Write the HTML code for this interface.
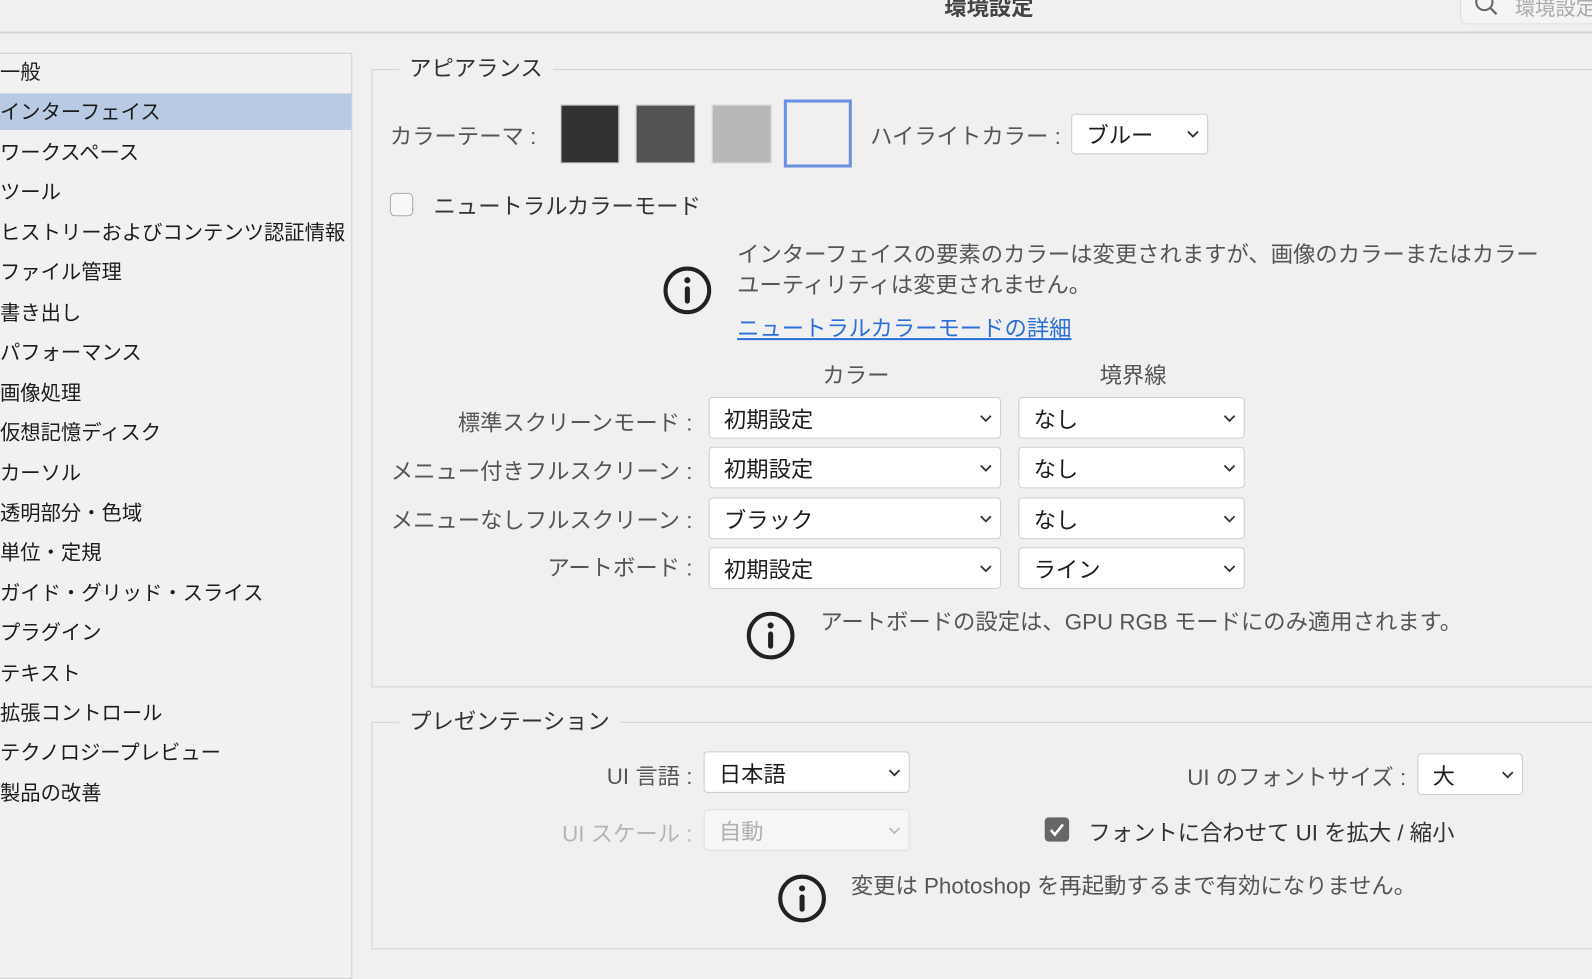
<!DOCTYPE html>
<html><head><meta charset="utf-8"><style>
body{margin:0;width:1592px;height:954px;background:#f0f0f0;overflow:hidden;position:relative;font-family:"Liberation Sans","Noto Sans CJK JP",sans-serif;color:#222}
#w{position:absolute;left:0;top:0;width:1568px;height:940px;transform:scale(1.0153);transform-origin:0 0}
.a{position:absolute;white-space:nowrap}
.sb{position:absolute;left:-2px;top:52px;width:347px;height:910px;border:1px solid #cfcfcf;background:#f1f1f1}
.it{position:absolute;left:0;font-size:20px;color:#1c1c1c;height:36px;line-height:36px;width:346px}
.lbl{font-size:22px;color:#555}
.r{text-align:right}
.sel{position:absolute;background:#fff;border:1.5px solid #cdcdcd;border-radius:4px;box-sizing:border-box;font-size:22px;color:#1e1e1e;padding-left:14px;display:flex;align-items:center}
.sel svg{position:absolute;right:8px;top:50%;margin-top:-4px}
.fs{position:absolute;border:1.5px solid #d4d4d4;border-right:none}
.leg{position:absolute;background:#f0f0f0;font-size:22px;color:#333;padding:0 10px}
.info{position:absolute}
</style></head><body><div id="w">
<div class="a" style="left:0;top:31px;width:1592px;height:2px;background:#d6d6d6"></div>
<div class="a" style="left:930px;top:-10px;font-size:22px;font-weight:bold;color:#444">環境設定</div>
<div class="a" style="left:1438px;top:-12px;width:170px;height:34px;border:1px solid #ddd;border-radius:8px;background:#f4f4f4"></div>
<svg class="a" style="left:1450px;top:-6px" width="28" height="26"><circle cx="12" cy="8" r="8" fill="none" stroke="#666" stroke-width="2"/><line x1="18" y1="14" x2="24" y2="20" stroke="#666" stroke-width="2.2"/></svg>
<div class="a" style="left:1492px;top:-8px;font-size:20px;color:#aaa">環境設定</div>

<div class="sb"></div>
<div class="a" style="left:0;top:92px;width:346px;height:36px;background:#b9cbe4"></div>
<div class="it" style="top:54px">一般</div>
<div class="it" style="top:93px">インターフェイス</div>
<div class="it" style="top:133px">ワークスペース</div>
<div class="it" style="top:172px">ツール</div>
<div class="it" style="top:212px">ヒストリーおよびコンテンツ認証情報</div>
<div class="it" style="top:251px">ファイル管理</div>
<div class="it" style="top:291px">書き出し</div>
<div class="it" style="top:330px">パフォーマンス</div>
<div class="it" style="top:370px">画像処理</div>
<div class="it" style="top:409px">仮想記憶ディスク</div>
<div class="it" style="top:449px">カーソル</div>
<div class="it" style="top:488px">透明部分・色域</div>
<div class="it" style="top:527px">単位・定規</div>
<div class="it" style="top:567px">ガイド・グリッド・スライス</div>
<div class="it" style="top:606px">プラグイン</div>
<div class="it" style="top:646px">テキスト</div>
<div class="it" style="top:685px">拡張コントロール</div>
<div class="it" style="top:724px">テクノロジープレビュー</div>
<div class="it" style="top:764px">製品の改善</div>

<div class="fs" style="left:366px;top:68px;width:1240px;height:607px"></div>
<div class="leg" style="left:393px;top:50px">アピアランス</div>
<div class="a lbl" style="left:384px;top:117px">カラーテーマ :</div>
<div class="a" style="left:552px;top:103px;width:58px;height:58px;background:#323232;border:1px solid #ddd;box-sizing:border-box"></div>
<div class="a" style="left:626px;top:103px;width:59px;height:58px;background:#535353;border:1px solid #ddd;box-sizing:border-box"></div>
<div class="a" style="left:701px;top:103px;width:59px;height:58px;background:#b8b8b8;border:1px solid #ddd;box-sizing:border-box"></div>
<div class="a" style="left:772px;top:98px;width:67px;height:67px;background:#f0f0f0;border:3px solid #6a90e0;box-sizing:border-box"></div>
<div class="a lbl" style="left:857px;top:117px">ハイライトカラー :</div>
<div class="sel" style="left:1055px;top:112px;width:135px;height:40px">ブルー<svg width="12" height="8"><path d="M1 1.5L6 6.5 11 1.5" fill="none" stroke="#333" stroke-width="1.8"/></svg></div>
<div class="a" style="left:384px;top:190px;width:23px;height:23px;border:1.5px solid #aaa;border-radius:5px;background:#f8f8f8;box-sizing:border-box"></div>
<div class="a" style="left:427px;top:186px;font-size:22px;color:#333">ニュートラルカラーモード</div>
<svg class="info" style="left:653px;top:262px" width="48" height="48"><circle cx="24" cy="24" r="21.5" fill="none" stroke="#222" stroke-width="4"/><circle cx="24" cy="14" r="3" fill="#222"/><rect x="21.5" y="20" width="5" height="17" rx="2.5" fill="#222"/></svg>
<div class="a lbl" style="left:726px;top:236px;line-height:30px">インターフェイスの要素のカラーは変更されますが、画像のカラーまたはカラー<br>ユーティリティは変更されません。</div>
<div class="a" style="left:726px;top:306px;font-size:22px;color:#2c6fd6;text-decoration:underline">ニュートラルカラーモードの詳細</div>
<div class="a lbl" style="left:810px;top:352px">カラー</div>
<div class="a lbl" style="left:1083px;top:352px">境界線</div>
<div class="a lbl r" style="right:886px;top:399px">標準スクリーンモード :</div>
<div class="a lbl r" style="right:886px;top:447px">メニュー付きフルスクリーン :</div>
<div class="a lbl r" style="right:886px;top:495px">メニューなしフルスクリーン :</div>
<div class="a lbl r" style="right:886px;top:542px">アートボード :</div>
<div class="sel" style="left:698px;top:391px;width:288px;height:41px">初期設定<svg width="12" height="8"><path d="M1 1.5L6 6.5 11 1.5" fill="none" stroke="#333" stroke-width="1.8"/></svg></div>
<div class="sel" style="left:698px;top:440px;width:288px;height:41px">初期設定<svg width="12" height="8"><path d="M1 1.5L6 6.5 11 1.5" fill="none" stroke="#333" stroke-width="1.8"/></svg></div>
<div class="sel" style="left:698px;top:490px;width:288px;height:41px">ブラック<svg width="12" height="8"><path d="M1 1.5L6 6.5 11 1.5" fill="none" stroke="#333" stroke-width="1.8"/></svg></div>
<div class="sel" style="left:698px;top:539px;width:288px;height:41px">初期設定<svg width="12" height="8"><path d="M1 1.5L6 6.5 11 1.5" fill="none" stroke="#333" stroke-width="1.8"/></svg></div>
<div class="sel" style="left:1003px;top:391px;width:223px;height:41px">なし<svg width="12" height="8"><path d="M1 1.5L6 6.5 11 1.5" fill="none" stroke="#333" stroke-width="1.8"/></svg></div>
<div class="sel" style="left:1003px;top:440px;width:223px;height:41px">なし<svg width="12" height="8"><path d="M1 1.5L6 6.5 11 1.5" fill="none" stroke="#333" stroke-width="1.8"/></svg></div>
<div class="sel" style="left:1003px;top:490px;width:223px;height:41px">なし<svg width="12" height="8"><path d="M1 1.5L6 6.5 11 1.5" fill="none" stroke="#333" stroke-width="1.8"/></svg></div>
<div class="sel" style="left:1003px;top:539px;width:223px;height:41px">ライン<svg width="12" height="8"><path d="M1 1.5L6 6.5 11 1.5" fill="none" stroke="#333" stroke-width="1.8"/></svg></div>
<svg class="info" style="left:735px;top:602px" width="48" height="48"><circle cx="24" cy="24" r="21.5" fill="none" stroke="#222" stroke-width="4"/><circle cx="24" cy="14" r="3" fill="#222"/><rect x="21.5" y="20" width="5" height="17" rx="2.5" fill="#222"/></svg>
<div class="a lbl" style="left:808px;top:595px">アートボードの設定は、GPU RGB モードにのみ適用されます。</div>

<div class="fs" style="left:366px;top:711px;width:1240px;height:222px"></div>
<div class="leg" style="left:393px;top:693px">プレゼンテーション</div>
<div class="a lbl r" style="right:886px;top:747px">UI 言語 :</div>
<div class="sel" style="left:693px;top:740px;width:203px;height:41px">日本語<svg width="12" height="8"><path d="M1 1.5L6 6.5 11 1.5" fill="none" stroke="#333" stroke-width="1.8"/></svg></div>
<div class="a lbl r" style="right:886px;top:804px;color:#b5b5b5">UI スケール :</div>
<div class="sel" style="left:693px;top:797px;width:203px;height:41px;color:#b0b0b0;border-color:#e0e0e0;background:#f6f6f6">自動<svg width="12" height="8"><path d="M1 1.5L6 6.5 11 1.5" fill="none" stroke="#bbb" stroke-width="1.8"/></svg></div>
<div class="a lbl r" style="right:183px;top:748px">UI のフォントサイズ :</div>
<div class="sel" style="left:1396px;top:742px;width:104px;height:41px">大<svg width="12" height="8"><path d="M1 1.5L6 6.5 11 1.5" fill="none" stroke="#333" stroke-width="1.8"/></svg></div>
<div class="a" style="left:1029px;top:805px;width:24px;height:24px;border-radius:4px;background:#666"></div>
<svg class="a" style="left:1029px;top:805px" width="24" height="24"><path d="M6 12.5l4 4.5 8-10" fill="none" stroke="#fff" stroke-width="2.6"/></svg>
<div class="a" style="left:1072px;top:803px;font-size:22px;color:#333">フォントに合わせて UI を拡大 / 縮小</div>
<svg class="info" style="left:766px;top:861px" width="48" height="48"><circle cx="24" cy="24" r="21.5" fill="none" stroke="#222" stroke-width="4"/><circle cx="24" cy="14" r="3" fill="#222"/><rect x="21.5" y="20" width="5" height="17" rx="2.5" fill="#222"/></svg>
<div class="a lbl" style="left:838px;top:855px">変更は Photoshop を再起動するまで有効になりません。</div>
</div></body></html>
